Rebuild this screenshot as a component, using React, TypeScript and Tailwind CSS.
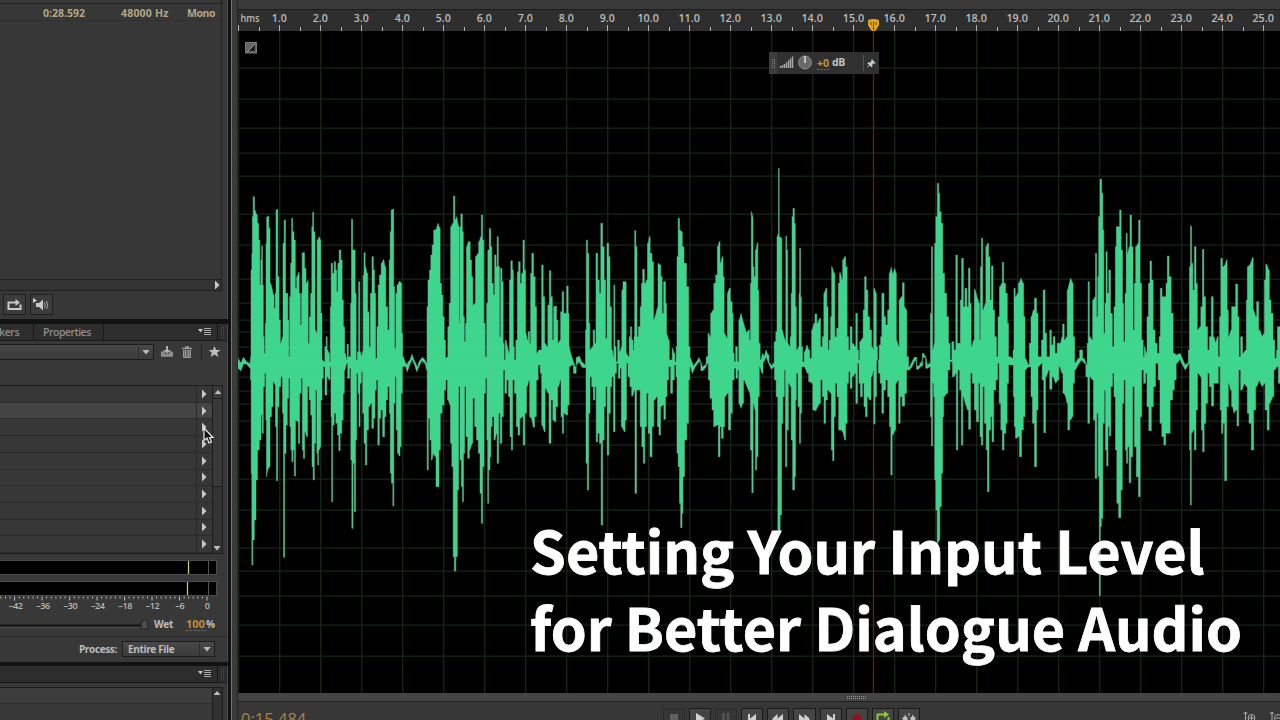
import { ReactNode } from 'react';
import clsx from 'clsx';

interface Segment {
  x: number;
  y: number;
  top: string;
  bottom: string;
}

// Peaks of the clip, three units per pixel
const segments: Segment[] = [
  {
    x: 230,
    y: 160,
    top: '24,595 33,610 40,592 50,605 60,612 62,590 64,330 67,280 67,170 72,110 75,150 80,165 84,190 88,240 91,375 94,300 96,258 99,375 101,530 104,580 107,490 109,250 111,172 115,168 118,205 122,370 126,385 130,405 134,445 137,400 139,150 142,148 145,350 149,480 153,550 158,530 160,250 165,180 168,400 172,400 175,480 178,590 180,410 184,310 186,175 190,215 194,240 198,385 202,350 206,337 209,400 213,495 216,400 217,278 221,278 226,325 230,370 233,362 236,550 240,470 244,400 247,200 249,157 253,215 257,510 260,520 263,240 268,230 271,240 274,460 278,600 282,605 287,560 290,530 293,570 297,580 300,605 302,440 305,310 310,340 315,305 318,330 322,395 325,310 330,270 335,300 338,420 342,500 346,580 350,600 353,552 357,590 361,590 363,430 366,178 370,270 374,270 377,400 380,600 384,575 388,365 391,575 395,590 399,570 400,345 404,278 407,320 411,340 415,455 419,560 424,400 428,290 432,330 435,400 439,595 443,500 446,375 451,345 456,310 461,298 465,320 470,440 476,510 479,300 482,215 485,150 490,147 492,380 496,565 499,400 503,375 509,363 514,370 516,520 520,590 525,605 531,615 535,605 540,600 546,583 552,600 557,610 562,622 568,604 577,592 585,600 590,612 592,440 596,360 601,330 604,285 609,255 613,210 618,210 624,190 629,205 632,370 637,405 640,470 645,540 648,595 652,590 655,500 660,430 664,200 668,190 673,108 676,180 680,170 683,185 686,200 688,490 690,200 695,162 699,215 701,470 705,545 708,490 711,260 715,245 719,245 722,300 727,350 730,435 735,430 738,290 744,280 748,245 752,230 756,165 760,240 763,490 768,590 772,430 775,270 781,205',
    bottom: '24,625 33,632 40,612 50,612 60,625 63,660 64,940 67,1215 70,1140 76,1080 80,960 85,870 91,840 95,765 98,820 102,680 106,640 109,780 110,950 113,930 118,920 122,770 127,740 131,665 135,675 138,800 141,962 145,740 149,680 156,650 159,760 162,1192 166,880 170,795 174,715 178,655 181,800 184,870 187,905 191,870 195,948 198,780 203,785 207,850 211,700 216,655 218,870 222,895 226,815 230,830 235,680 240,720 244,765 248,920 251,960 255,850 259,690 262,880 264,915 268,870 271,860 274,720 278,655 282,620 288,705 293,650 298,660 302,620 304,770 306,1025 310,795 315,760 320,790 325,825 328,872 333,820 338,780 341,700 345,630 350,610 356,655 361,625 364,900 367,1105 371,910 375,1055 378,840 382,640 386,700 388,800 392,670 396,635 400,760 404,850 408,915 413,810 418,740 423,730 428,805 433,775 437,690 441,660 446,855 450,775 455,750 461,830 466,770 470,720 476,680 480,760 482,940 487,970 490,1038 493,730 497,650 500,810 505,880 508,888 512,860 515,700 519,620 526,618 532,635 538,617 546,598 553,612 560,635 566,622 575,602 585,610 590,630 593,930 597,775 602,840 606,900 610,880 616,890 620,980 625,980 629,870 633,760 640,735 645,690 650,660 655,720 660,735 663,850 668,920 671,1190 675,1233 680,1190 684,990 688,680 692,900 696,980 699,1025 702,880 706,680 710,830 716,895 720,870 726,850 731,715 737,800 742,840 748,880 752,1000 756,1090 760,920 764,700 769,655 772,840 774,1030 778,930 782,890',
  },
  {
    x: 490,
    y: 180,
    top: '0,150 3,200 8,310 12,345 16,225 20,260 23,170 27,260 30,470 34,265 38,305 41,490 44,540 48,480 52,500 57,520 60,300 65,242 69,270 71,500 75,540 80,480 84,275 88,245 93,310 97,280 101,180 105,270 108,460 112,480 117,455 121,490 123,280 128,220 133,290 138,380 141,520 147,510 153,510 157,255 162,350 166,490 171,500 176,375 180,272 185,350 189,480 193,380 197,378 202,420 205,490 210,480 214,395 219,335 223,400 227,400 233,318 236,400 238,500 242,520 248,538 255,560 262,532 268,528 275,545 285,555 288,450 290,180 295,220 298,430 301,510 307,500 312,450 316,490 320,220 326,300 330,340 335,130 340,200 345,300 348,475 354,190 358,230 362,380 367,510 370,530 373,315 376,500 380,545 386,480 390,515 395,500 396,330 402,305 407,305 410,520 415,530 420,470 423,440 427,480 431,510 433,470 435,152 440,200 442,470 448,440 453,380 456,310 460,268 466,310 470,300 475,190 478,170 483,220 489,245 492,420 498,400 503,380 505,250 510,255 515,290 518,400 524,305 529,370 530,460 536,480 540,540 545,540 548,505 552,520 557,545 560,500 562,230 567,115 570,150 575,155 579,200 585,250 594,320 598,500 602,535 610,558 620,545 627,533 632,545 638,562 645,555 652,530 656,460 660,470 664,400 669,390 674,310 680,285 684,200 688,185 692,250 697,230 701,290 704,460 711,475 713,340 718,325 724,365 729,400 730,520 735,545 739,500 745,545 748,420 753,400 758,420 764,440 770,460 775,450 781,480',
    bottom: '0,830 4,740 9,710 15,780 19,760 24,850 28,700 33,790 38,710 42,570 47,640 53,600 58,650 62,770 66,810 70,600 77,640 81,740 87,765 92,715 97,710 102,795 107,700 112,620 117,600 121,710 126,720 130,742 137,710 141,600 148,555 153,580 157,735 163,755 168,625 174,640 180,790 186,660 191,720 195,725 200,680 206,620 211,600 215,710 219,760 223,700 230,705 236,675 239,560 246,555 255,580 262,552 268,545 276,562 286,563 290,850 294,930 298,700 302,590 308,620 312,660 317,620 320,785 326,760 331,790 336,1035 340,780 345,680 349,620 354,825 359,700 363,620 368,590 373,755 377,580 382,550 388,595 392,565 396,740 403,755 408,720 411,550 417,590 422,620 428,648 433,630 437,940 442,630 448,630 453,740 458,800 462,850 467,740 472,640 477,760 483,830 489,740 494,660 500,650 505,740 509,765 514,680 519,675 524,718 529,650 533,600 539,560 545,640 550,600 556,555 560,590 562,820 567,860 570,970 574,1043 578,1000 580,890 587,780 594,730 597,600 601,560 607,580 616,560 627,545 638,572 646,564 653,550 657,600 663,655 669,690 673,740 682,735 688,830 692,740 697,775 702,740 706,650 712,640 719,750 725,700 729,600 736,565 740,595 745,570 748,670 753,685 758,670 763,600 769,615 775,630 781,640',
  },
  {
    x: 750,
    y: 150,
    top: '0,570 3,400 5,185 8,200 10,350 14,380 18,300 22,278 25,420 28,580 33,630 38,610 43,620 48,600 54,615 60,640 66,648 70,640 75,575 80,545 82,260 85,250 86,55 89,260 94,265 97,540 102,560 107,575 108,258 112,300 114,580 119,590 122,560 125,430 127,200 131,175 135,220 137,470 141,600 146,590 148,430 150,295 153,440 155,590 160,635 165,605 171,585 176,600 183,625 187,540 192,520 198,492 203,520 209,505 214,590 220,560 223,430 228,415 233,470 235,600 240,570 244,500 246,350 252,370 257,560 263,535 267,400 271,368 276,390 280,330 284,320 290,350 293,560 298,600 303,530 309,580 315,590 320,490 324,600 327,630 331,575 337,565 342,480 346,380 351,420 356,500 362,540 367,590 370,600 373,415 378,430 380,590 385,630 390,585 394,560 397,430 400,430 404,500 410,525 416,480 419,370 424,352 428,375 434,355 438,370 440,570 446,590 449,450 454,440 461,398 464,470 469,480 472,620 479,650 485,638 493,622 507,648 514,635 520,610 528,622 532,645 540,640 543,490 546,290 549,600 553,580 555,280 560,200 564,100 568,130 570,185 577,220 580,370 587,430 593,500 598,580 603,630 608,575 615,600 620,315 624,580 630,580 632,450 638,325 642,470 648,415 653,470 658,355 662,460 665,590 671,570 675,418 681,440 687,460 690,570 693,350 696,265 700,480 706,460 709,290 713,280 718,320 722,450 727,348 731,480 737,560 742,620 746,500 751,410 755,400 759,337 763,400 770,430 774,520 777,620 782,620',
    bottom: '0,740 3,900 8,1028 11,760 15,780 18,960 22,920 26,740 30,650 36,670 42,635 48,620 56,640 64,658 72,650 75,690 82,740 85,1140 88,1150 93,1095 96,820 101,740 105,660 108,950 113,840 117,700 122,710 125,870 131,1020 136,980 137,750 141,670 147,770 150,880 153,790 157,650 164,650 172,670 180,695 186,700 191,780 197,782 203,770 209,760 214,690 220,740 224,820 229,750 235,720 242,730 246,900 250,932 254,800 258,700 264,740 268,840 275,840 280,850 284,870 290,820 293,700 298,665 303,715 309,680 315,670 320,760 325,640 329,700 334,740 340,700 344,770 349,800 354,740 360,750 366,680 370,660 373,822 377,740 382,630 388,670 393,700 398,790 404,720 410,690 416,740 421,830 424,975 429,855 435,840 439,700 444,690 448,820 453,740 460,768 468,730 471,660 478,660 486,650 494,632 505,658 514,648 522,622 532,655 540,650 543,800 546,888 549,700 553,740 555,990 560,1080 563,1180 568,1170 571,1070 577,970 579,800 583,740 590,730 597,660 603,635 612,680 617,670 621,900 626,660 632,720 636,885 641,740 646,760 653,780 659,838 664,670 670,700 676,780 683,815 688,700 692,860 696,885 701,710 706,820 711,900 714,1025 720,840 724,800 728,875 734,720 741,690 745,640 750,760 755,840 759,900 765,850 770,820 773,700 778,645 782,635',
  },
  {
    x: 1010,
    y: 150,
    top: '0,620 7,625 11,600 13,415 18,440 23,430 27,400 33,385 39,400 43,500 47,625 55,645 61,580 65,500 70,480 77,445 82,490 86,620 92,620 97,570 102,420 108,550 112,620 118,620 121,540 127,585 132,560 138,610 145,580 152,580 156,560 160,522 165,570 170,560 173,420 178,400 182,385 188,400 191,560 197,638 205,625 213,600 222,625 230,645 233,580 236,395 240,560 246,570 250,450 255,440 258,310 262,500 265,380 267,200 273,88 277,130 280,240 283,550 287,460 289,305 294,430 299,360 304,490 310,590 314,470 318,290 320,230 327,230 331,180 336,300 339,460 343,575 347,430 350,250 353,310 358,290 362,195 367,290 371,540 375,400 379,290 384,280 388,210 392,400 397,570 402,620 404,590 409,610 413,500 418,400 422,333 427,390 432,540 438,580 445,610 450,560 452,415 460,440 466,440 470,400 474,318 480,380 487,490 492,610 500,615 510,610 518,628 525,645 533,640 537,600 540,350 543,228 546,340 551,420 556,290 560,400 564,540 570,530 575,470 580,298 583,440 590,530 595,600 601,560 607,440 612,560 617,580 622,560 627,620 631,500 634,325 640,350 645,345 650,330 653,480 657,560 663,540 667,470 673,470 681,402 685,500 689,620 695,560 700,610 707,600 711,450 713,350 720,345 728,322 731,480 737,500 743,455 749,540 757,560 762,550 765,390 770,343 776,360 780,450 786,490 792,570 797,625 802,600 803,530 810,530',
    bottom: '0,645 8,645 12,740 14,830 19,865 25,860 32,920 37,840 43,800 47,660 53,652 61,650 65,740 70,820 77,950 82,780 86,650 94,640 99,690 104,848 109,680 116,660 122,718 130,680 137,700 143,690 150,650 156,670 162,730 167,740 171,760 176,840 182,810 187,800 191,700 196,660 204,645 214,630 224,640 231,680 236,820 241,680 248,690 253,810 258,985 263,790 266,980 270,1337 272,1130 276,1105 281,820 285,720 288,900 292,948 296,830 300,858 305,710 310,670 314,740 319,900 322,1060 330,1103 335,1020 339,760 344,690 348,900 351,940 355,890 360,998 365,920 371,710 376,890 382,980 389,1040 392,800 398,660 404,700 409,670 413,770 420,842 428,770 432,710 441,640 448,690 452,820 459,860 464,885 470,850 476,850 485,750 490,720 496,690 501,640 510,628 518,645 526,660 537,640 540,900 542,1065 546,850 550,840 556,900 560,780 565,670 572,680 576,840 580,905 585,820 590,760 596,670 601,710 608,768 614,700 622,700 628,650 633,780 636,850 641,820 647,992 653,770 657,700 662,720 668,770 672,790 678,780 684,828 688,660 696,720 703,700 710,710 714,790 720,820 728,900 734,780 740,710 748,690 756,710 763,700 768,780 775,840 780,760 788,740 795,660 800,650 810,700',
  },
];

const levelLines = [68, 99, 128, 153, 176, 214, 245, 279, 303, 320, 332, 347, 363, 377, 391, 404, 421, 445, 479, 510, 548, 571, 596, 625, 656];
const seconds = Array.from({ length: 26 }, (_, i) => i);
const decibels = [-42, -36, -30, -24, -18, -12, -6, 0];
const effectRows = Array.from({ length: 10 }, (_, i) => i);

// Large jumps between two peaks are drawn as steps, small ones as slopes
const stepped = (line: string) => {
  const points = line.split(' ').map((p) => p.split(',').map(Number));
  return points.flatMap(([x, y], i) => {
    const prev = points[i - 1];
    if (!prev || Math.abs(prev[1] - y) < 24) return [`${x},${y}`];
    const mid = (prev[0] + x) / 2;
    return [`${mid},${prev[1]}`, `${mid},${y}`, `${x},${y}`];
  });
};

const outline = (s: Segment) => [...stepped(s.top), ...stepped(s.bottom).reverse()].join(' ');

const Waveform = () => (
  <svg className="block h-[662px] w-[1042px]" viewBox="238 31 1042 662">
    <rect x="238" y="31" width="1042" height="662" fill="#000" />
    <g stroke="#17261a" strokeWidth="1.3">
      {seconds.map((s) => (
        <path key={s} d={`M${238.7 + s * 41} 31V693`} />
      ))}
      {levelLines.map((y) => (
        <path key={y} d={`M238 ${y + 0.2}H1280`} />
      ))}
    </g>
    <path d="M873.5 31V693" stroke="#701a1a" strokeWidth="1.3" />
    {segments.map((s) => (
      <g key={s.x} transform={`translate(${s.x} ${s.y}) scale(${1 / 3})`}>
        <polygon points={outline(s)} fill="#3dd68c" stroke="#6fb894" strokeWidth="1.5" strokeLinejoin="bevel" />
      </g>
    ))}
    <g stroke="#5cdc9c" strokeOpacity=".25">
      {[347, 363, 377].map((y) => (
        <path key={y} d={`M252 ${y + 0.5}H321M331 ${y + 0.5}H342M428 ${y + 0.5}H444M448 ${y + 0.5}H502M677 ${y + 0.5}H689M935 ${y + 0.5}H947M1100 ${y + 0.5}H1140`} />
      ))}
    </g>
    <g>
      <rect x="245.5" y="42.5" width="11" height="10.5" fill="#666" stroke="#777" />
      <path d="M248 51l7-7v7z" fill="#222" />
      <path d="M247.5 51.5l8-8" stroke="#999" />
    </g>
  </svg>
);

const Ruler = () => (
  <div className="h-[22px] border-t border-[#1c1c1c] bg-[#2e2e2e]">
    <svg className="block h-[21px] w-[1042px]" viewBox="238 10 1042 21">
      <g stroke="#b4b4b4">
        {seconds.map((s) => (
          <path key={s} d={`M${238.5 + s * 41} 25v6M${259.5 + s * 41} 27v4`} />
        ))}
      </g>
      <g fill="#bcbcbc" fontFamily="'Open Sans', sans-serif" fontSize="10.5" fontWeight="600" textAnchor="middle">
        <text x="250" y="22" textLength="19" lengthAdjust="spacingAndGlyphs">hms</text>
        {seconds.slice(1).map((s) => (
          <text
            key={s}
            x={s === 15 ? 853.5 : 279.2 + (s - 1) * 41}
            y="22"
            textLength={s < 10 ? 15 : 21.5}
            lengthAdjust="spacingAndGlyphs"
          >
            {s.toFixed(1)}
          </text>
        ))}
      </g>
      <path d="M868 20q5.5-2 11 0v5q-2 4-4 6h-3q-2-2-4-6z" fill="#e0a51e" />
      <path d="M871 22v3M873.5 22v8M876 22v3" stroke="#6b4a08" />
    </svg>
  </div>
);

const GainHud = () => (
  <div className="absolute left-[531px] top-[52px] flex h-[22px] w-[110px] items-center bg-[#303030] text-[10.5px] font-bold text-[#c4c4c4]">
    <svg className="h-[22px] w-[47px]" viewBox="0 0 47 22">
      <rect width="8" height="22" fill="#3d3d3d" />
      <path d="M3.500 7v9M5.500 7v9" stroke="#888" strokeDasharray="1 1" />
      <path d="M11.500 14v2M13.500 13v3M15.500 12v4M17.500 10.500V16M19.500 8.500V16M21.500 6.500V16M23.500 4.500V16" stroke="#aaa" strokeWidth="1.4" />
      <circle cx="36" cy="10.500" r="6.500" fill="#696969" stroke="#8a8a8a" />
      <path d="M36 4v7" stroke="#eee" strokeWidth="1.300" />
    </svg>
    <span className="ml-px border-b border-dotted border-[#9a7030] leading-[12px] text-[#cc9135]">+0</span>
    <span className="ml-[3px] tracking-[-0.5px]">dB</span>
    <svg className="ml-auto h-[22px] w-[17px]" viewBox="0 0 17 22">
      <path d="M1.500 3v16" stroke="#555" />
      <path d="M9.500 6.500l4 4-1 .8-1.200-.5-1.600 1.600.2 2-1 1-2-2-2 2-.8.2.2-.8 2-2-2-2 1-1 2 .2 1.600-1.600-.4-1.200z" transform="translate(1.5 1.500) scale(.9)" fill="#c8c8c8" />
    </svg>
  </div>
);

const PanelMenu = () => (
  <svg className="h-[17px] w-[29px] shrink-0" viewBox="0 0 29 17">
    <path d="M0 5h5l-2.500 3.500z" fill="#c4c4c4" />
    <path d="M6 4.500h7M6 6.500h7M6 8.500h7M6 10.500h7" stroke="#aaa" />
    <path d="M19.500 0v17" stroke="#151515" />
    <path d="M23.500 3v11M25.500 3v11" stroke="#4a4a4a" strokeDasharray="1 1" />
  </svg>
);

const Arrow = ({ dir, className }: { dir: 'up' | 'down' | 'right'; className?: string }) => (
  <svg className={clsx('h-[10px] w-[10px] shrink-0', className)} viewBox="0 0 10 10">
    {dir === 'up' && <path d="M1.500 7h7L5 3z" fill="#bdbdbd" />}
    {dir === 'down' && <path d="M1.500 3h7L5 7.500z" fill="#bdbdbd" />}
    {dir === 'right' && <path d="M3 .5v9L7.500 5z" fill="#c8c8c8" />}
  </svg>
);

const FilesPanel = () => (
  <div className="flex h-[319px] flex-col border-r border-[#474747] bg-[#373737]">
    <div className="mr-[5px] h-[279px] border-r border-[#222] bg-[#373737]">
      <div className="h-1 border-b border-[#222]" />
      <div className="flex h-[17px] items-center justify-end border-b border-[#303030] pr-[6px] pt-[3px] text-[10.5px] font-bold text-[#b5a684]">
        <span className="w-[78px]">0:28.592</span>
        <span className="w-[66px] tracking-[0.2px]">48000 Hz</span>
        <span className="w-7 tracking-[-0.4px]">Mono</span>
      </div>
    </div>
    <div className="mr-[5px] flex h-3 items-center justify-end border-y border-r border-[#202020] bg-[#333]">
      <Arrow dir="right" className="-mr-px" />
    </div>
    <div className="flex gap-1 pl-[3px] pt-[3px]">
      <div className="flex h-[21px] w-[23px] items-center justify-center border border-[#202020] bg-[#3c3c3c]">
        <svg className="h-[15px] w-[15px]" viewBox="0 0 15 15">
          <path d="M4 5.500H1.500V12h12V7.500M4 5.500h6" fill="none" stroke="#c8c8c8" strokeWidth="2" />
          <path d="M8.500 2l4.500 3.500L8.500 9z" fill="#c8c8c8" />
        </svg>
      </div>
      <div className="flex h-[21px] w-[23px] items-center justify-center border border-[#202020] bg-[#3c3c3c]">
        <svg className="-ml-0.5 h-[15px] w-[17px]" viewBox="0 0 17 15">
          <path d="M1 1l4 2.500L1 6z" fill="#d0d0d0" />
          <path d="M4 6h3l4-3.500v11L7 10H4z" fill="#c8c8c8" />
          <path d="M12.500 5.500q1.500 2.500 0 5M14.500 4q2.500 4 0 8" fill="none" stroke="#a8a8a8" />
        </svg>
      </div>
    </div>
  </div>
);

const SelectBox = ({ className, children }: { className: string; children?: ReactNode }) => (
  <div className={clsx('flex h-4 items-center border border-[#1c1c1c] bg-linear-to-b from-[#484848] to-[#3b3b3b]', className)}>
    <span className="flex-1 pl-[5px]">{children}</span>
    <span className="h-3 w-px bg-[#2a2a2a]" />
    <Arrow dir="down" className="mx-0.5" />
  </div>
);

const EffectsRack = () => (
  <div className="mt-[5px] h-[338px] border-r border-[#474747] bg-[#383838] text-[10px] font-bold tracking-[-0.35px] text-[#bdbdbd]">
    <div className="flex h-[17px] items-center border-b border-[#1a1a1a] bg-[#2d2d2d] text-[10.5px] font-semibold text-[#8d8d8d]">
      <div className="w-[34px] border-r border-[#1a1a1a] leading-4">
        <span className="-ml-px">kers</span>
      </div>
      <div className="w-[70px] border-r border-[#1a1a1a] pl-[9px] leading-4 tracking-[-0.5px]">Properties</div>
      <div className="ml-auto flex">
        <PanelMenu />
      </div>
    </div>
    <div className="flex h-[44px] items-start pt-[3px]">
      <SelectBox className="w-[154px] border-l-0" />
      <svg className="ml-[6px] h-4 w-[64px]" viewBox="0 0 64 16">
        <path d="M1 7.500h4v2h4v-2h4v5H1z" fill="#888" />
        <path d="M1.500 8v4h11V8M3 8l2-1.500M11 8L9 6.500" fill="none" stroke="#999" />
        <path d="M7 9.500L3.500 6H6V2h2v4h2.500z" fill="#b0b0b0" />
        <path d="M22 4.500h10M25 3h4" stroke="#999" strokeWidth="1.500" />
        <path d="M23 6h8l-.6 8h-6.800z" fill="#6a6a6a" />
        <path d="M23.500 6v7.500h7V6M25.500 6v7M28.500 6v7" fill="none" stroke="#999" />
        <path d="M41.500 0v16" stroke="#222" />
        <path d="M54.500 2l1.700 4h4.300l-3.400 2.700 1.300 4.300-3.900-2.600-3.900 2.600 1.300-4.300L48.500 6h4.300z" fill="#bdbdbd" />
      </svg>
    </div>
    <div className="mr-1 flex h-[169px] border-y border-[#1d1d1d]">
      <div className="flex flex-1 flex-col">
        {effectRows.map((row) => (
          <div
            key={row}
            className={clsx('flex flex-1 border-b border-[#2b2b2b]', row === 1 ? 'bg-[#444]' : 'bg-[#373737]')}
          >
            <div className="w-[197px] border-r border-[#292929]" />
            <div className="flex flex-1 items-center justify-center">
              <Arrow dir="right" className="-ml-0.5" />
            </div>
          </div>
        ))}
      </div>
      <div className="flex w-[11px] flex-col border-x border-[#1c1c1c] bg-[#333]">
        <div className="flex h-[13px] items-center justify-center border-b border-[#1c1c1c] bg-[#3a3a3a]">
          <Arrow dir="up" />
        </div>
        <div className="h-[88px] border-b border-[#1c1c1c] bg-[#393939]" />
        <Arrow dir="down" className="mt-auto -ml-px" />
      </div>
    </div>
    <svg className="mt-[6px] block h-[53px] w-[227px]" viewBox="0 560 227 53">
      <rect x="-1" y="560.500" width="217.500" height="14" fill="#000" stroke="#4c4c4c" />
      <rect x="-1" y="581.500" width="217.500" height="14" fill="#000" stroke="#4c4c4c" />
      <path d="M208.500 561v13M208.500 582v13" stroke="#555" />
      <path d="M188.500 561v13M187.500 582v13" stroke="#d6d35e" strokeWidth="1.200" />
      {Array.from({ length: 46 }, (_, i) => (
        <path key={i} d={`M${(207 - i * 4.58).toFixed(1)} 596.500v${i % 6 ? 2 : 4}`} stroke="#b8b8b8" />
      ))}
      {decibels.map((db) => (
        <text
          key={db}
          x={207.2 + db * 4.56}
          y="609"
          fill="#b8b8b8"
          fontSize="9"
          fontWeight="600"
          textAnchor="middle"
        >
          {String(db).replace('-', '–')}
        </text>
      ))}
    </svg>
    <div className="flex h-[24px] items-center border-b border-[#2a2a2a]">
      <svg className="h-4 w-[154px]" viewBox="0 0 154 16">
        <path d="M0 8.500h148" stroke="#161616" strokeWidth="2" />
        <path d="M0 10.500h148" stroke="#484848" />
        <path d="M141 12V6l3.500-4L148 6v6z" fill="#4c4c4c" stroke="#1e1e1e" />
      </svg>
      <span className="w-8">Wet</span>
      <span className="w-5 border-b border-dotted border-[#9a7030] text-[11px] leading-[12px] tracking-normal text-[#c08c36]">100</span>
      <span>%</span>
    </div>
    <div className="flex h-[24px] items-center justify-end pr-3">
      Process:
      <SelectBox className="ml-[5px] w-[93px]">Entire File</SelectBox>
    </div>
  </div>
);

const HistoryPanel = () => (
  <div className="mt-[4px] h-[54px] border-r border-[#474747] bg-[#383838]">
    <div className="flex h-[17px] justify-end border-b border-[#1a1a1a] bg-[#2d2d2d]">
      <PanelMenu />
    </div>
    <div className="mr-1 mt-1 flex h-[33px] border-t border-[#1d1d1d]">
      <div className="flex-1">
        <div className="h-[16px] border-b border-[#2d2d2d] bg-[#3c3c3c]" />
      </div>
      <div className="w-[11px] border-x border-[#1c1c1c] bg-[#303030]">
        <Arrow dir="up" className="-ml-px" />
      </div>
    </div>
  </div>
);

// Play controls, only their upper part shows above the window edge
const transport = [
  { id: 'stop', off: true, icon: <path d="M7 6h8v8H7z" fill="#606060" /> },
  { id: 'play', icon: <path d="M7 5l9 5.500L7 16z" fill="#d0d0d0" /> },
  { id: 'pause', off: true, icon: <path d="M8.500 5v10M13 5v10" stroke="#555" strokeWidth="2.500" /> },
  { id: 'first', icon: <path d="M7 6h2v4.500L15 6v10l-6-4.500V16H7z" fill="#d0d0d0" /> },
  { id: 'rewind', icon: <path d="M5 11l5.500-5v4.500L16 6v10l-5.500-4.500V16z" fill="#d0d0d0" /> },
  { id: 'forward', icon: <path d="M17 11l-5.500-5v4.500L6 6v10l5.500-4.500V16z" fill="#d0d0d0" /> },
  { id: 'last', icon: <path d="M15 6h-2v4.500L7 6v10l6-4.500V16h2z" fill="#d0d0d0" /> },
  { id: 'record', icon: <circle cx="11" cy="10.500" r="4.500" fill="#8e1520" /> },
  {
    id: 'loop',
    icon: (
      <g>
        <path d="M7.500 6.500H5.500V14h11V9M5.500 6.500h7" fill="none" stroke="#8fc63d" strokeWidth="2" />
        <path d="M12 3l5 3.500-5 3.500z" fill="#8fc63d" />
      </g>
    ),
  },
  {
    id: 'skip',
    icon: (
      <g fill="#c0c0c0">
        <path d="M8 6.500l-4 4 4 4v-2.500h1.500V9H8zM14 6.500l4 4-4 4v-2.500h-1.500V9H14z" />
        <path d="M10.500 5h1v3h-1z" />
      </g>
    ),
  },
];

const TransportBar = () => (
  <div className="flex h-[18px] items-start overflow-hidden bg-[#373737]">
    <div className="h-full w-[425px] pl-[3px] pt-[6px] text-[16.5px] leading-[22px] text-[#a88348]">0:15.484</div>
    <div className="flex gap-1 pt-[6px]">
      {transport.map((b) => (
        <div
          key={b.id}
          className={clsx(
            'h-[22px] w-[22.100px] shrink-0 border',
            b.off ? 'border-[#2c2c2c] bg-[#363636]' : 'border-[#1b1b1b] bg-[#444]',
          )}
        >
          <svg className="-ml-px -mt-px h-[22px] w-[22px]" viewBox="0 0 22 22">
            {b.icon}
          </svg>
        </div>
      ))}
    </div>
    <svg className="ml-auto h-[18px] w-[38px]" viewBox="1242 702 38 18">
      <g fill="none" stroke="#b0b0b0">
        <path d="M1245.500 712v8M1243.500 714l2-2 2 2" />
        <circle cx="1251.500" cy="718" r="3.500" />
        <path d="M1249 718h5M1251.500 715.500v5" />
        <path d="M1272 712v8M1270 714l2-2 2 2" />
        <circle cx="1278" cy="718" r="3.500" />
        <path d="M1276 718h4" />
      </g>
    </svg>
  </div>
);

const App = () => {
  return (
    <div className="relative flex h-[720px] w-[1280px] overflow-hidden bg-[#121212] font-['Open_Sans',sans-serif]">
      <aside className="w-[228px] shrink-0">
        <FilesPanel />
        <EffectsRack />
        <HistoryPanel />
      </aside>
      <div className="ml-[3px] w-px bg-[#80705c]" />
      <main className="flex flex-1 bg-[#3a3a3a]">
        <div className="w-[6px] border-r border-[#252525]" />
        <div className="relative flex w-[1042px] flex-col">
          <div className="h-[9px]" />
          <Ruler />
          <Waveform />
          <div className="flex h-[9px] items-center border-b border-[#202020] bg-[#444]">
            <svg className="ml-[609px] mt-0.5 h-1 w-5" viewBox="0 0 20 4">
              <path d="M0 .5h20M0 2.500h20" stroke="#999" strokeDasharray="1 1" />
            </svg>
          </div>
          <TransportBar />
          <GainHud />
        </div>
      </main>

      {/* Mouse pointer */}
      <svg className="absolute left-[203px] top-[427px] h-[18px] w-3" viewBox="0 0 12 18">
        <path d="M1 1v12.500l3-2.500 2 5 2.500-1-2-4.500H10z" fill="#111" stroke="#eee" strokeWidth="1.200" />
      </svg>

      <h1 className="absolute left-[530px] top-[511px] whitespace-nowrap font-['Noto_Sans_CJK_SC',sans-serif] text-[57.5px] font-bold leading-[77px] text-white [-webkit-text-stroke:0.8px_white]">
        Setting Your Input Level
        <br />
        for Better Dialogue Audio
      </h1>
    </div>
  );
};

export default App;
